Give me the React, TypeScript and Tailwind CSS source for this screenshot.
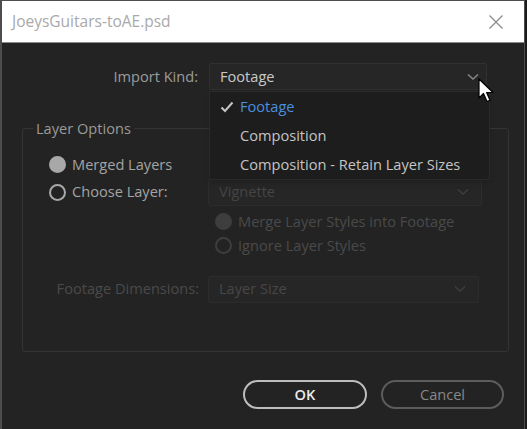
import { useState } from 'react';

const font = { fontFamily: '"Open Sans", "Noto Sans", sans-serif' };

function Chevron({ className }: { className?: string }) {
  return (
    <svg width="12" height="8" viewBox="0 0 12 8" className={className}>
      <path d="M1 1.5 L6 6 L11 1.5" fill="none" stroke="currentColor" strokeWidth="1.4" />
    </svg>
  );
}

function Radio({ checked, dim }: { checked?: boolean; dim?: boolean }) {
  const c = dim ? 'border-[#3e3e3e]' : 'border-[#a8a8a8]';
  const f = dim ? 'bg-[#3e3e3e]' : 'bg-[#a8a8a8]';
  return checked ? (
    <span className={`w-[17px] h-[17px] rounded-full ${f} border-2 ${c} shrink-0`} />
  ) : (
    <span className={`w-[17px] h-[17px] rounded-full border-2 ${c} shrink-0`} />
  );
}

function Cursor() {
  return (
    <svg width="18" height="26" viewBox="0 0 18 26" className="absolute left-[476px] top-[77px]">
      <path
        d="M1 1 L1 20 L5.5 15.5 L9 23.5 L12 22.2 L8.6 14.5 L15 14.5 Z"
        fill="#fff"
        stroke="#000"
        strokeWidth="1.2"
        strokeLinejoin="round"
      />
    </svg>
  );
}

export default function App() {
  const [kind] = useState('Footage');
  const options = ['Footage', 'Composition', 'Composition - Retain Layer Sizes'];

  return (
    <div className="w-[527px] h-[429px] bg-[#1b1b1b] text-[14.6px] font-medium" style={font}>
      <div className="relative w-[525px] h-full bg-[#232323] border-l-2 border-t border-r border-[#4d4d4d] flex flex-col">
        {/* title bar */}
        <div className="h-[42px] bg-white border-b border-[#8a8a8a] flex items-center justify-between pl-[10px] pr-[20px] shrink-0">
          <span className="text-[15.5px] font-normal text-[#a9a9a9]">JoeysGuitars-toAE.psd</span>
          <svg width="16" height="16" viewBox="0 0 16 16">
            <path d="M1.5 1.5 L14.5 14.5 M14.5 1.5 L1.5 14.5" stroke="#8c8c8c" strokeWidth="1.3" />
          </svg>
        </div>

        {/* import kind */}
        <div className="flex items-center mt-[20px]">
          <span className="w-[196px] text-right text-[#9c9c9c]">Import Kind:</span>
          <div className="ml-[11px] w-[278px] h-[27px] bg-[#262626] border border-[#303030] rounded-[2px] flex items-center justify-between pl-[10px] pr-[7px] text-[#c9c9c9]">
            <span>{kind}</span>
            <Chevron className="text-[#8a8a8a]" />
          </div>
        </div>

        {/* layer options */}
        <fieldset className="mx-[20px] mt-[28px] h-[234px] border border-[#343434] rounded-[3px]">
          <legend className="ml-[10px] px-[3px] text-[#9a9a9a]">Layer Options</legend>
          <div className="px-[26px]">
            <div className="flex items-center gap-[6px] mt-[14px] text-[#a4a4a4]">
              <Radio checked />
              <span>Merged Layers</span>
            </div>
            <div className="flex items-center mt-[3px] text-[#a4a4a4]">
              <div className="flex items-center gap-[6px] w-[159px]">
                <Radio />
                <span>Choose Layer:</span>
              </div>
              <div className="w-[274px] h-[27px] bg-[#262626] border border-[#2c2c2c] rounded-[2px] flex items-center justify-between pl-[10px] pr-[12px] text-[#454545]">
                <span>Vignette</span>
                <Chevron className="text-[#3e3e3e]" />
              </div>
            </div>
            <div className="ml-[166px] mt-[5px] flex flex-col gap-[2px] text-[#4a4a4a]">
              <div className="flex items-center gap-[6px]">
                <Radio checked dim />
                <span>Merge Layer Styles into Footage</span>
              </div>
              <div className="flex items-center gap-[6px]">
                <Radio dim />
                <span>Ignore Layer Styles</span>
              </div>
            </div>
            <div className="flex items-center mt-[19px] -ml-[46px]">
              <span className="w-[196px] text-right text-[#4a4a4a]">Footage Dimensions:</span>
              <div className="ml-[9px] w-[271px] h-[27px] bg-[#262626] border border-[#2c2c2c] rounded-[2px] flex items-center justify-between pl-[10px] pr-[12px] text-[#474747]">
                <span>Layer Size</span>
                <Chevron className="text-[#3e3e3e]" />
              </div>
            </div>
          </div>
        </fieldset>

        {/* buttons */}
        <div className="flex justify-end gap-[14px] mt-[28px] pr-[20px]">
          <button className="w-[124px] h-[29px] rounded-full border-2 border-[#bdbdbd] text-[#ececec] font-semibold">
            OK
          </button>
          <button className="w-[123px] h-[29px] rounded-full border-2 border-[#5c5c5c] text-[#888]">
            Cancel
          </button>
        </div>

        {/* open menu */}
        <div className="absolute left-[207px] top-[90px] w-[281px] h-[89px] bg-[#1d1d1d] border border-[#2a2a2a] shadow-md flex flex-col justify-center">
          {options.map((o, i) => (
            <div key={o} className="h-[30px] flex items-center">
              <span className="w-[30px] flex justify-center pl-[3px]">
                {i === 0 && (
                  <svg width="14" height="12" viewBox="0 0 14 12">
                    <path d="M1.5 6.5 L5 10 L12.5 1.5" fill="none" stroke="#c4c4c4" strokeWidth="2" />
                  </svg>
                )}
              </span>
              <span className={i === 0 ? 'text-[#4b8fdf]' : 'text-[#c4c4c4]'}>{o}</span>
            </div>
          ))}
        </div>

        <Cursor />
      </div>
    </div>
  );
}
